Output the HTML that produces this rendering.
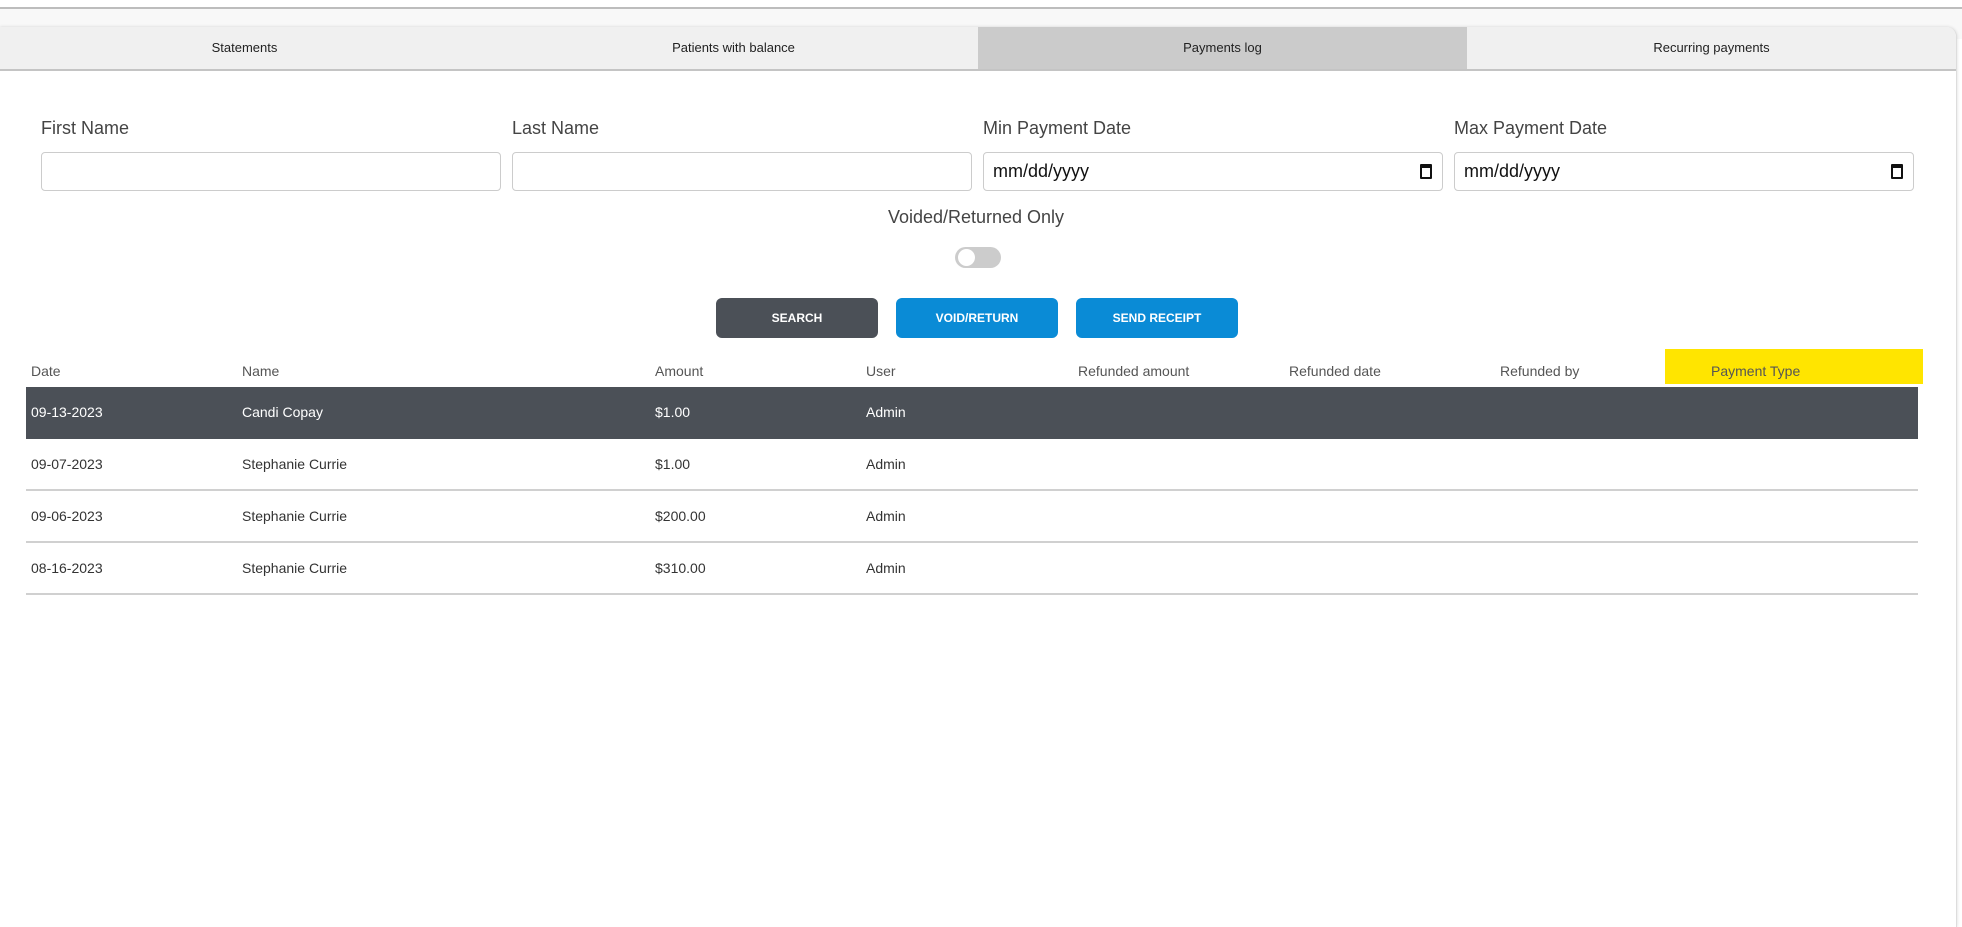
<!DOCTYPE html>
<html><head><meta charset="utf-8"><style>
*{box-sizing:border-box;margin:0;padding:0}
body{width:1962px;height:859px;background:#fff;font-family:"Liberation Sans",sans-serif;position:relative;overflow:hidden}
.topline{position:absolute;left:0;top:7px;width:1962px;height:2px;background:#bdbdbd}
.topbg{position:absolute;left:0;top:9px;width:1962px;height:30px;background:#f8f8f8}
.card{position:absolute;left:0;top:27px;width:1957px;height:900px;background:#fff;border-right:1px solid #ddd;border-top-right-radius:10px;box-shadow:0 0 3px rgba(0,0,0,.15);overflow:hidden}
.tabs{position:absolute;left:0;top:0;width:1957px;height:44px;background:#f0f0f0;border-bottom:2px solid #c4c4c4;display:flex}
.tab{width:489px;text-align:center;line-height:42px;font-size:13px;color:#222}
.tab.act{background:#cbcbcb}
.lbl{position:absolute;top:118px;font-size:18px;color:#444}
.inp{position:absolute;top:152px;width:460px;height:39px;border:1px solid #ccc;border-radius:4px;background:#fff;font-size:18px;color:#111;padding-left:9px;line-height:37px}
.cal{position:absolute;right:10px;top:11px;width:12px;height:15px;border:2px solid #111;border-top-width:4px;border-radius:1px}
.vo{position:absolute;top:207px;left:0;width:1952px;text-align:center;font-size:18px;color:#444}
.tog{position:absolute;left:955px;top:247px;width:46px;height:21px;border-radius:11px;background:#ccc}
.tog:after{content:"";position:absolute;left:3px;top:2px;width:17px;height:17px;border-radius:50%;background:#fff}
.btn{position:absolute;top:298px;height:40px;width:162px;border-radius:6px;color:#fff;font-weight:bold;font-size:12px;text-align:center;line-height:40px}
.th{position:absolute;top:363px;font-size:14px;color:#555}
.row{position:absolute;left:26px;width:1892px;height:52px;border-bottom:2px solid #d0d0d0}
.row span{position:absolute;top:17px;font-size:14px;color:#333}
.dark{background:#4b5057;border-bottom:none}
.dark span{color:#fff}
</style></head><body>
<div class="topbg"></div><div class="topline"></div>
<div class="card">
<div class="tabs"><div class="tab">Statements</div><div class="tab">Patients with balance</div><div class="tab act">Payments log</div><div class="tab">Recurring payments</div></div>
</div>
<div class="lbl" style="left:41px">First Name</div>
<div class="lbl" style="left:512px">Last Name</div>
<div class="lbl" style="left:983px">Min Payment Date</div>
<div class="lbl" style="left:1454px">Max Payment Date</div>
<div class="inp" style="left:41px"></div>
<div class="inp" style="left:512px"></div>
<div class="inp" style="left:983px">mm/dd/yyyy<div class="cal"></div></div>
<div class="inp" style="left:1454px">mm/dd/yyyy<div class="cal"></div></div>
<div class="vo">Voided/Returned Only</div>
<div class="tog"></div>
<div class="btn" style="left:716px;background:#4b5057">SEARCH</div>
<div class="btn" style="left:896px;background:#0a8bd6">VOID/RETURN</div>
<div class="btn" style="left:1076px;background:#0a8bd6">SEND RECEIPT</div>
<div style="position:absolute;left:1665px;top:349px;width:258px;height:35px;background:#ffe500"></div>
<div class="th" style="left:31px">Date</div>
<div class="th" style="left:242px">Name</div>
<div class="th" style="left:655px">Amount</div>
<div class="th" style="left:866px">User</div>
<div class="th" style="left:1078px">Refunded amount</div>
<div class="th" style="left:1289px">Refunded date</div>
<div class="th" style="left:1500px">Refunded by</div>
<div class="th" style="left:1711px">Payment Type</div>
<div class="row dark" style="top:387px"><span style="left:5px">09-13-2023</span><span style="left:216px">Candi Copay</span><span style="left:629px">$1.00</span><span style="left:840px">Admin</span></div>
<div class="row" style="top:439px"><span style="left:5px">09-07-2023</span><span style="left:216px">Stephanie Currie</span><span style="left:629px">$1.00</span><span style="left:840px">Admin</span></div>
<div class="row" style="top:491px"><span style="left:5px">09-06-2023</span><span style="left:216px">Stephanie Currie</span><span style="left:629px">$200.00</span><span style="left:840px">Admin</span></div>
<div class="row" style="top:543px"><span style="left:5px">08-16-2023</span><span style="left:216px">Stephanie Currie</span><span style="left:629px">$310.00</span><span style="left:840px">Admin</span></div>
</body></html>
